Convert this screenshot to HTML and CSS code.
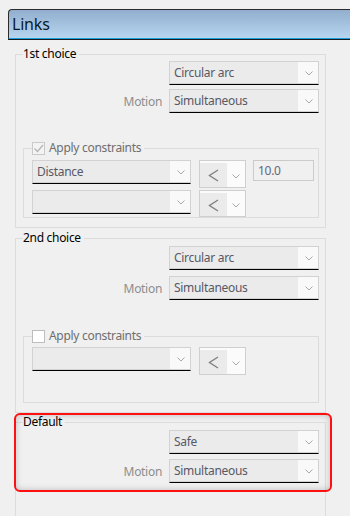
FILE: index.html
```html
<!DOCTYPE html>
<html lang="en">

<head>
  <meta charset="UTF-8">
  <meta name="viewport" content="width=device-width, initial-scale=1.0">
  <title>Links</title>
  <link rel="stylesheet" href="styles.css">
</head>

<body>
  <div id="titleBar">Links</div>

  <div id="panel">
    <!-- 1st choice -->
    <fieldset class="group first">
      <legend>1st choice</legend>
      <div class="row">
        <div class="combo">
          <span class="value">Circular arc</span>
          <span class="arrow"><svg width="8" height="5" viewBox="0 0 8 5"><path d="M0.5 0.5 L4 4 L7.5 0.5" fill="none" stroke="#a8a8a8"/></svg></span>
        </div>
      </div>
      <div class="row next">
        <span class="label">Motion</span>
        <div class="combo">
          <span class="value">Simultaneous</span>
          <span class="arrow"><svg width="8" height="5" viewBox="0 0 8 5"><path d="M0.5 0.5 L4 4 L7.5 0.5" fill="none" stroke="#a8a8a8"/></svg></span>
        </div>
      </div>

      <fieldset class="constraints">
        <legend>
          <span class="check checked"><svg width="11" height="11" viewBox="0 0 11 11"><path d="M1.5 5.5 L4.5 8.5 L10 2" fill="none" stroke="#b4b4b4" stroke-width="1.2"/></svg></span>
          Apply constraints
        </legend>
        <div class="constraint-grid">
          <div class="combo wide">
            <span class="value">Distance</span>
            <span class="arrow"><svg width="8" height="5" viewBox="0 0 8 5"><path d="M0.5 0.5 L4 4 L7.5 0.5" fill="none" stroke="#a8a8a8"/></svg></span>
          </div>
          <div class="op">
            <span class="op-sign"><svg width="11" height="13" viewBox="0 0 11 13"><path d="M10 1 L1.5 6.5 L10 12" fill="none" stroke="#808080" stroke-width="1.4"/></svg></span>
            <span class="op-arrow"><svg width="8" height="5" viewBox="0 0 8 5"><path d="M0.5 0.5 L4 4 L7.5 0.5" fill="none" stroke="#a8a8a8"/></svg></span>
          </div>
          <div class="number">10.0</div>
          <div class="combo wide">
            <span class="value"></span>
            <span class="arrow"><svg width="8" height="5" viewBox="0 0 8 5"><path d="M0.5 0.5 L4 4 L7.5 0.5" fill="none" stroke="#a8a8a8"/></svg></span>
          </div>
          <div class="op">
            <span class="op-sign"><svg width="11" height="13" viewBox="0 0 11 13"><path d="M10 1 L1.5 6.5 L10 12" fill="none" stroke="#808080" stroke-width="1.4"/></svg></span>
            <span class="op-arrow"><svg width="8" height="5" viewBox="0 0 8 5"><path d="M0.5 0.5 L4 4 L7.5 0.5" fill="none" stroke="#a8a8a8"/></svg></span>
          </div>
        </div>
      </fieldset>
    </fieldset>

    <!-- 2nd choice -->
    <fieldset class="group second">
      <legend>2nd choice</legend>
      <div class="row">
        <div class="combo">
          <span class="value">Circular arc</span>
          <span class="arrow"><svg width="8" height="5" viewBox="0 0 8 5"><path d="M0.5 0.5 L4 4 L7.5 0.5" fill="none" stroke="#a8a8a8"/></svg></span>
        </div>
      </div>
      <div class="row next">
        <span class="label">Motion</span>
        <div class="combo">
          <span class="value">Simultaneous</span>
          <span class="arrow"><svg width="8" height="5" viewBox="0 0 8 5"><path d="M0.5 0.5 L4 4 L7.5 0.5" fill="none" stroke="#a8a8a8"/></svg></span>
        </div>
      </div>

      <fieldset class="constraints">
        <legend>
          <span class="check"></span>
          Apply constraints
        </legend>
        <div class="constraint-grid">
          <div class="combo wide">
            <span class="value"></span>
            <span class="arrow"><svg width="8" height="5" viewBox="0 0 8 5"><path d="M0.5 0.5 L4 4 L7.5 0.5" fill="none" stroke="#a8a8a8"/></svg></span>
          </div>
          <div class="op">
            <span class="op-sign"><svg width="11" height="13" viewBox="0 0 11 13"><path d="M10 1 L1.5 6.5 L10 12" fill="none" stroke="#808080" stroke-width="1.4"/></svg></span>
            <span class="op-arrow"><svg width="8" height="5" viewBox="0 0 8 5"><path d="M0.5 0.5 L4 4 L7.5 0.5" fill="none" stroke="#a8a8a8"/></svg></span>
          </div>
        </div>
      </fieldset>
    </fieldset>

    <!-- Default -->
    <fieldset class="group default">
      <legend>Default</legend>
      <div class="row">
        <div class="combo">
          <span class="value">Safe</span>
          <span class="arrow"><svg width="8" height="5" viewBox="0 0 8 5"><path d="M0.5 0.5 L4 4 L7.5 0.5" fill="none" stroke="#a8a8a8"/></svg></span>
        </div>
      </div>
      <div class="row next">
        <span class="label">Motion</span>
        <div class="combo">
          <span class="value">Simultaneous</span>
          <span class="arrow"><svg width="8" height="5" viewBox="0 0 8 5"><path d="M0.5 0.5 L4 4 L7.5 0.5" fill="none" stroke="#a8a8a8"/></svg></span>
        </div>
      </div>
    </fieldset>
  </div>

  <!-- highlight drawn over the Default group -->
  <div id="highlight"></div>
</body>

</html>
```

FILE: styles.css
```css
body {
  background-color: #f0f0f0;
  margin: 0;
  padding: 0;
  font-family: "Noto Sans", "Open Sans", sans-serif;
  font-size: 12px;
  letter-spacing: -0.3px;
  color: #000;
  position: relative;
  height: 516px;
  overflow: hidden;
}

#titleBar {
  margin: 9px 0 0 8px;
  height: 28px;
  padding-left: 3px;
  border-top: 1px solid #2c2c2c;
  border-left: 1px solid #2c2c2c;
  border-bottom: 1px solid #1c9fe0;
  border-top-left-radius: 4px;
  background: linear-gradient(#91aece, #b7d5ef);
  box-shadow: 0 1px 0 #1b1b1b;
  font-size: 16px;
  letter-spacing: -0.2px;
  line-height: 28px;
  color: #0a1a2c;
}

#panel {
  padding: 8px 0 0 15px;
}

.group {
  box-sizing: border-box;
  width: 311px;
  margin: 0;
  padding: 0 6px 9px 7px;
  border: 1px solid #dcdcdc;
  min-width: 0;
}

.group > legend {
  padding: 0 3px 0 0;
  line-height: 14px;
  color: #000;
}

.group.second {
  margin-top: 3px;
  padding-top: 1px;
}

.group.second .row.next {
  margin-top: 6px;
}

.group.default {
  margin-top: 2px;
  padding-top: 1px;
  padding-bottom: 40px;
}

.group.default .row.next {
  margin-top: 5px;
}

.row {
  display: flex;
  justify-content: flex-end;
  align-items: center;
  height: 24px;
}

.row.next {
  margin-top: 4px;
}

.label {
  margin-right: 7px;
  color: #8d8d8d;
}

.combo {
  box-sizing: border-box;
  display: flex;
  width: 150px;
  height: 24px;
  border: 1px solid #d2d2d2;
  border-bottom: 1px solid #000;
  box-shadow: inset 0 -1px 0 #d2d2d2;
  background-color: #f9f9f9;
}

.combo.wide {
  width: 159px;
}

.combo .value {
  flex: 1;
  padding-left: 4px;
  background-color: #ebebeb;
  margin-bottom: 1px;
  line-height: 21px;
  color: #585866;
  white-space: nowrap;
}

.combo .arrow {
  width: 19px;
  display: flex;
  justify-content: center;
  align-items: center;
  padding-left: 1px;
}

.constraints {
  margin: 28px 0 0 0;
  padding: 5px 5px 0 8px;
  border: 1px solid #dcdcdc;
  min-width: 0;
}

.constraints legend {
  display: flex;
  align-items: center;
  gap: 4px;
  padding: 0 3px 0 0;
  line-height: 14px;
  color: #6e6e6e;
}

.second .constraints {
  margin-top: 29px;
  padding-top: 4px;
  padding-bottom: 27px;
}

.check {
  box-sizing: border-box;
  width: 13px;
  height: 13px;
  border: 1px solid #bdbdbd;
  background-color: #fff;
  display: flex;
  align-items: center;
  justify-content: center;
}

.check.checked {
  border-color: #cacaca;
  background-color: #f3f3f3;
}

.constraint-grid {
  display: grid;
  grid-template-columns: 159px 47px 60px;
  grid-template-rows: 28px 27px;
  column-gap: 8px;
  row-gap: 2px;
  align-items: start;
}

.second .constraint-grid {
  grid-template-rows: 28px;
}

.op {
  box-sizing: border-box;
  display: flex;
  height: 100%;
  padding-top: 2px;
  border: 1px solid #cfcfcf;
  background-color: #fbfbfb;
}

.op-sign {
  width: 27px;
  background-color: #ebebeb;
  display: flex;
  align-items: center;
  justify-content: center;
  padding-top: 1px;
}

.op-arrow {
  flex: 1;
  display: flex;
  align-items: center;
  justify-content: center;
  padding-top: 2px;
}

.number {
  box-sizing: border-box;
  margin-left: -1px;
  height: 21px;
  padding-left: 4px;
  border: 1px solid #cbcbcb;
  background-color: #f0f0f0;
  line-height: 20px;
  color: #66667a;
}

#highlight {
  position: absolute;
  left: 14px;
  top: 413px;
  width: 318px;
  height: 79px;
  box-sizing: border-box;
  border: 2px solid #ff1010;
  border-radius: 6px;
  box-shadow: inset 0 0 6px rgba(0, 0, 0, 0.22);
  pointer-events: none;
}
```
